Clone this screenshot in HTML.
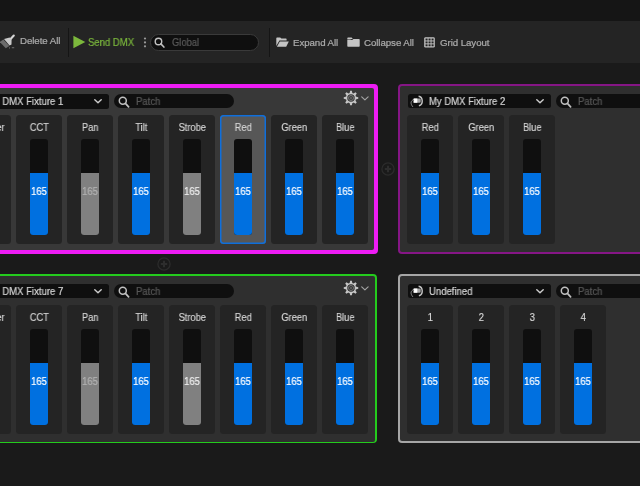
<!DOCTYPE html>
<html><head><meta charset="utf-8"><title>DMX Control Console</title><style>
html,body{margin:0;padding:0;}
body{-webkit-text-stroke:0.22px;width:640px;height:486px;overflow:hidden;background:#1a1a1a;position:relative;font-family:"Liberation Sans",sans-serif;font-size:9.6px;color:#c0c0c0;}
.top{position:absolute;left:0;top:0;width:640px;height:21px;background:#151515;}
.tb{position:absolute;left:0;top:21px;width:640px;height:42.4px;background:#242424;}
.t,.ddt,.ph,.lbl,.fill span,.gst{will-change:transform;}
.t{position:absolute;white-space:nowrap;line-height:12px;height:12px;color:#ababab;font-size:9.7px;letter-spacing:-0.06px;}
.sep{position:absolute;width:1.2px;background:#151515;top:27.5px;height:29.5px;}
.gs{position:absolute;left:150px;top:34.4px;width:106.5px;height:14.3px;border:1px solid #3a3a3a;border-radius:9px;background:#0f0f0f;}
.panel{position:absolute;border-radius:4px;}
.pin{position:absolute;border-radius:2px;}
.dd{position:absolute;width:143.3px;height:14.4px;background:#0f0f0f;border-radius:2.5px;}
.dd .fx{position:absolute;left:0;top:0;}
.dd .ddt{position:absolute;left:21.3px;top:1.7px;line-height:12px;color:#d4d4d4;white-space:nowrap;font-size:10.3px;transform:scaleX(0.925);transform-origin:0 50%;}
.dd .chev{position:absolute;left:128.2px;top:5.1px;}
.srch{position:absolute;width:120.5px;height:14px;background:#0f0f0f;border-radius:8px;}
.srch .mag{position:absolute;left:4px;top:1.6px;}
.ph{position:absolute;left:22.3px;top:1.8px;line-height:12px;color:#575757;font-size:10.3px;transform:scaleX(0.93);transform-origin:0 50%;}
.gear{position:absolute;}
.card{position:absolute;width:46.5px;height:129px;background:#242424;border-radius:3.5px;}
.card.sel{background:#575757;box-shadow:inset 0 0 0 1.5px #0f6fdc;}
.lbl{position:absolute;left:0;width:46.5px;top:6.9px;text-align:center;line-height:12px;color:#d8d8d8;font-size:10.1px;transform:scaleX(0.92);-webkit-text-stroke:0.15px;}
.trk{position:absolute;left:14.4px;top:23.8px;width:17.9px;height:96.3px;background:#0f0f0f;border-radius:3px;overflow:hidden;}
.fill{position:absolute;left:0;right:0;bottom:0;height:62.5px;}
.fill span{position:absolute;left:-10px;right:-10px;top:12.1px;text-align:center;line-height:12px;font-size:10.7px;transform:scaleX(0.87);-webkit-text-stroke:0.2px;}
.plus{position:absolute;}
</style></head><body>
<div class="top"></div><div class="tb"></div>
<svg style="position:absolute;left:0;top:33px;" width="16" height="17" viewBox="0 0 16 17"><path d="M13.8 2.5 L10.6 6.0" stroke="#d4d4d4" stroke-width="2.1" stroke-linecap="round"/><path d="M4.0 5.9 L9.6 4.6 L11.6 6.4 L11.5 11.4 L9.5 12.4 Z" fill="#cacaca"/><path d="M3.4 6.4 L9.3 12.9 L5.8 15.2 L-0.2 9.0 Z" fill="#6c6c6c"/><rect x="9.1" y="14.5" width="0.9" height="0.9" fill="#8a8a8a"/><rect x="11.8" y="14.3" width="2.4" height="0.9" fill="#7a7a7a"/></svg>
<div class="t" style="left:20.3px;top:34.6px;">Delete All</div>
<div class="sep" style="left:67.6px;"></div>
<svg style="position:absolute;left:73px;top:35px;" width="13" height="14" viewBox="0 0 13 14"><path d="M0.4 0.7 L12.3 7 L0.4 13.3 Z" fill="#7cb83c"/></svg>
<div class="t" style="left:88.2px;top:36.8px;color:#7ab63c;font-size:10.4px;transform:scaleX(0.925);transform-origin:0 50%;">Send DMX</div>
<svg style="position:absolute;left:142.8px;top:37px;" width="4" height="11" viewBox="0 0 4 11"><circle cx="2" cy="1.5" r="1.1" fill="#9a9a9a"/><circle cx="2" cy="5.4" r="1.1" fill="#9a9a9a"/><circle cx="2" cy="9.3" r="1.1" fill="#9a9a9a"/></svg>
<div class="gs"><svg style="position:absolute;left:3.2px;top:1.4px;" viewBox="0 0 12 12" width="11.2" height="11.2"><circle cx="4.8" cy="4.8" r="3.5" fill="none" stroke="#c0c0c0" stroke-width="1.5"/><path d="M7.4 7.4 L10.6 10.8" stroke="#c0c0c0" stroke-width="1.7" stroke-linecap="round"/></svg><span class="gst" style="position:absolute;left:21px;top:1.9px;line-height:12px;color:#5a5a5a;font-size:10.4px;transform:scaleX(0.9);transform-origin:0 50%;">Global</span></div>
<div class="sep" style="left:269px;"></div>
<svg style="position:absolute;left:276px;top:37px;" width="13" height="10" viewBox="0 0 13 10"><path d="M0.3 1.2 Q0.3 0.4 1.1 0.4 L4.2 0.4 L5.4 1.6 L10 1.6 Q10.6 1.6 10.6 2.3 L10.6 3.4 L3.4 3.4 L0.3 9 Z" fill="#c4c4c4"/><path d="M3.8 4.4 L12.8 4.4 L10.2 9.7 L0.9 9.7 Z" fill="#c4c4c4"/></svg>
<div class="t" style="left:293.3px;top:36.8px;">Expand All</div>
<svg style="position:absolute;left:347px;top:37px;" width="13" height="10" viewBox="0 0 13 10"><path d="M0.3 1.2 Q0.3 0.4 1.1 0.4 L4.6 0.4 L5.8 1.7 L3 2.4 L0.3 2.4 Z" fill="#c4c4c4"/><path d="M0.3 3 L5.2 3 L6.4 2 L12 2 Q12.7 2 12.7 2.7 L12.7 9 Q12.7 9.7 12 9.7 L1 9.7 Q0.3 9.7 0.3 9 Z" fill="#c4c4c4"/></svg>
<div class="t" style="left:364.3px;top:36.8px;">Collapse All</div>
<svg style="position:absolute;left:424px;top:37.4px;" width="11" height="11" viewBox="0 0 11 11"><rect x="0.2" y="0.2" width="10.6" height="10.4" rx="1.4" fill="#c4c4c4"/><g fill="#242424"><rect x="1.5" y="1.5" width="2.1" height="2"/><rect x="4.5" y="1.5" width="2.1" height="2"/><rect x="7.5" y="1.5" width="2.1" height="2"/><rect x="1.5" y="4.4" width="2.1" height="2"/><rect x="4.5" y="4.4" width="2.1" height="2"/><rect x="7.5" y="4.4" width="2.1" height="2"/><rect x="1.5" y="7.3" width="2.1" height="2"/><rect x="4.5" y="7.3" width="2.1" height="2"/><rect x="7.5" y="7.3" width="2.1" height="2"/></g></svg>
<div class="t" style="left:440.4px;top:36.8px;">Grid Layout</div>
<div class="panel" style="left:-44px;top:84.2px;width:421.5px;height:169.6px;background:#ee1cf5;">
<div class="pin" style="left:3.7px;top:3.7px;right:3.7px;bottom:4.1px;background:#383838;"></div>
<div class="dd" style="left:10px;top:10px;"><svg class="fx" viewBox="0 0 17 14.4" width="17" height="14.4"><path d="M5.4 5.8 C3.0 6.6 1.9 9.4 4.9 12.9" fill="none" stroke="#8c8c8c" stroke-width="1"/><path d="M10.6 2.2 C15.2 2.8 15.6 10.8 10.9 11.8" fill="none" stroke="#c4c4c4" stroke-width="1.4"/><rect x="5.4" y="4.5" width="7.3" height="4.3" rx="1" fill="#a4a4a4"/><path d="M6.2 4.5 H9.3 V8.8 H6.2 Q5.4 8.8 5.4 8 L6.3 6.65 L5.4 5.3 Q5.4 4.5 6.2 4.5 Z" fill="#ffffff"/></svg><span class="ddt">My DMX Fixture 1</span><svg class="chev" viewBox="0 0 10 6" width="8" height="4.8"><path d="M1 1 L5 4.8 L9 1" fill="none" stroke="#cccccc" stroke-width="1.8" stroke-linecap="round" stroke-linejoin="round"/></svg></div>
<div class="srch" style="left:157.5px;top:10.3px;"><svg class="mag" viewBox="0 0 12 12" width="12" height="12"><circle cx="4.8" cy="4.8" r="3.5" fill="none" stroke="#c0c0c0" stroke-width="1.5"/><path d="M7.4 7.4 L10.6 10.8" stroke="#c0c0c0" stroke-width="1.7" stroke-linecap="round"/></svg><span class="ph">Patch</span></div>
<svg class="gear" style="left:387.1px;top:6.2px;" viewBox="-8 -8 16 16" width="16" height="16"><path d="M-1.45 -4.6 L-0.85 -7.25 L0.85 -7.25 L1.45 -4.6 Z" fill="#c6c6c6" transform="rotate(0)"/><path d="M-1.45 -4.6 L-0.85 -7.25 L0.85 -7.25 L1.45 -4.6 Z" fill="#c6c6c6" transform="rotate(45)"/><path d="M-1.45 -4.6 L-0.85 -7.25 L0.85 -7.25 L1.45 -4.6 Z" fill="#c6c6c6" transform="rotate(90)"/><path d="M-1.45 -4.6 L-0.85 -7.25 L0.85 -7.25 L1.45 -4.6 Z" fill="#c6c6c6" transform="rotate(135)"/><path d="M-1.45 -4.6 L-0.85 -7.25 L0.85 -7.25 L1.45 -4.6 Z" fill="#c6c6c6" transform="rotate(180)"/><path d="M-1.45 -4.6 L-0.85 -7.25 L0.85 -7.25 L1.45 -4.6 Z" fill="#c6c6c6" transform="rotate(225)"/><path d="M-1.45 -4.6 L-0.85 -7.25 L0.85 -7.25 L1.45 -4.6 Z" fill="#c6c6c6" transform="rotate(270)"/><path d="M-1.45 -4.6 L-0.85 -7.25 L0.85 -7.25 L1.45 -4.6 Z" fill="#c6c6c6" transform="rotate(315)"/><circle r="4.45" fill="none" stroke="#c6c6c6" stroke-width="1.4"/><circle r="2.5" fill="none" stroke="#858585" stroke-width="0.8"/><circle r="1.2" fill="#5c5c5c"/></svg>
<svg style="position:absolute;left:404.6px;top:12.3px;" viewBox="0 0 9 6" width="8" height="5.33"><path d="M0.8 0.9 L4.4 4.4 L8 0.9" fill="none" stroke="#a4a4a4" stroke-width="1.3" stroke-linecap="round" stroke-linejoin="round"/></svg>
<div class="card" style="left:8.8px;top:31px;"><div class="lbl">Dimmer</div><div class="trk"><div class="fill" style="background:#0070e0;color:#ffffff;"><span>165</span></div></div></div>
<div class="card" style="left:59.8px;top:31px;"><div class="lbl">CCT</div><div class="trk"><div class="fill" style="background:#0070e0;color:#ffffff;"><span>165</span></div></div></div>
<div class="card" style="left:110.8px;top:31px;"><div class="lbl">Pan</div><div class="trk"><div class="fill" style="background:#808080;color:#b2b2b2;"><span>165</span></div></div></div>
<div class="card" style="left:161.8px;top:31px;"><div class="lbl">Tilt</div><div class="trk"><div class="fill" style="background:#0070e0;color:#ffffff;"><span>165</span></div></div></div>
<div class="card" style="left:212.8px;top:31px;"><div class="lbl">Strobe</div><div class="trk"><div class="fill" style="background:#808080;color:#f0f0f0;"><span>165</span></div></div></div>
<div class="card sel" style="left:263.8px;top:31px;"><div class="lbl">Red</div><div class="trk"><div class="fill" style="background:#0070e0;color:#ffffff;"><span>165</span></div></div></div>
<div class="card" style="left:314.8px;top:31px;"><div class="lbl">Green</div><div class="trk"><div class="fill" style="background:#0070e0;color:#ffffff;"><span>165</span></div></div></div>
<div class="card" style="left:365.8px;top:31px;"><div class="lbl">Blue</div><div class="trk"><div class="fill" style="background:#0070e0;color:#ffffff;"><span>165</span></div></div></div>
</div>
<div class="panel" style="left:398px;top:84px;width:421.5px;height:169.7px;background:#861686;">
<div class="pin" style="left:2px;top:2px;right:2px;bottom:2px;background:#2f2f2f;"></div>
<div class="dd" style="left:10px;top:10px;"><svg class="fx" viewBox="0 0 17 14.4" width="17" height="14.4"><path d="M5.4 5.8 C3.0 6.6 1.9 9.4 4.9 12.9" fill="none" stroke="#8c8c8c" stroke-width="1"/><path d="M10.6 2.2 C15.2 2.8 15.6 10.8 10.9 11.8" fill="none" stroke="#c4c4c4" stroke-width="1.4"/><rect x="5.4" y="4.5" width="7.3" height="4.3" rx="1" fill="#a4a4a4"/><path d="M6.2 4.5 H9.3 V8.8 H6.2 Q5.4 8.8 5.4 8 L6.3 6.65 L5.4 5.3 Q5.4 4.5 6.2 4.5 Z" fill="#ffffff"/></svg><span class="ddt">My DMX Fixture 2</span><svg class="chev" viewBox="0 0 10 6" width="8" height="4.8"><path d="M1 1 L5 4.8 L9 1" fill="none" stroke="#cccccc" stroke-width="1.8" stroke-linecap="round" stroke-linejoin="round"/></svg></div>
<div class="srch" style="left:157.5px;top:10.3px;"><svg class="mag" viewBox="0 0 12 12" width="12" height="12"><circle cx="4.8" cy="4.8" r="3.5" fill="none" stroke="#c0c0c0" stroke-width="1.5"/><path d="M7.4 7.4 L10.6 10.8" stroke="#c0c0c0" stroke-width="1.7" stroke-linecap="round"/></svg><span class="ph">Patch</span></div>
<div class="card" style="left:8.8px;top:31px;"><div class="lbl">Red</div><div class="trk"><div class="fill" style="background:#0070e0;color:#ffffff;"><span>165</span></div></div></div>
<div class="card" style="left:59.8px;top:31px;"><div class="lbl">Green</div><div class="trk"><div class="fill" style="background:#0070e0;color:#ffffff;"><span>165</span></div></div></div>
<div class="card" style="left:110.8px;top:31px;"><div class="lbl">Blue</div><div class="trk"><div class="fill" style="background:#0070e0;color:#ffffff;"><span>165</span></div></div></div>
</div>
<div class="panel" style="left:-44px;top:274px;width:420.8px;height:169.0px;background:#24cb1d;">
<div class="pin" style="left:1.5px;top:1.5px;right:1.5px;bottom:1.5px;background:#2f2f2f;"></div>
<div class="dd" style="left:10px;top:10px;"><svg class="fx" viewBox="0 0 17 14.4" width="17" height="14.4"><path d="M5.4 5.8 C3.0 6.6 1.9 9.4 4.9 12.9" fill="none" stroke="#8c8c8c" stroke-width="1"/><path d="M10.6 2.2 C15.2 2.8 15.6 10.8 10.9 11.8" fill="none" stroke="#c4c4c4" stroke-width="1.4"/><rect x="5.4" y="4.5" width="7.3" height="4.3" rx="1" fill="#a4a4a4"/><path d="M6.2 4.5 H9.3 V8.8 H6.2 Q5.4 8.8 5.4 8 L6.3 6.65 L5.4 5.3 Q5.4 4.5 6.2 4.5 Z" fill="#ffffff"/></svg><span class="ddt">My DMX Fixture 7</span><svg class="chev" viewBox="0 0 10 6" width="8" height="4.8"><path d="M1 1 L5 4.8 L9 1" fill="none" stroke="#cccccc" stroke-width="1.8" stroke-linecap="round" stroke-linejoin="round"/></svg></div>
<div class="srch" style="left:157.5px;top:10.3px;"><svg class="mag" viewBox="0 0 12 12" width="12" height="12"><circle cx="4.8" cy="4.8" r="3.5" fill="none" stroke="#c0c0c0" stroke-width="1.5"/><path d="M7.4 7.4 L10.6 10.8" stroke="#c0c0c0" stroke-width="1.7" stroke-linecap="round"/></svg><span class="ph">Patch</span></div>
<svg class="gear" style="left:387.1px;top:6.2px;" viewBox="-8 -8 16 16" width="16" height="16"><path d="M-1.45 -4.6 L-0.85 -7.25 L0.85 -7.25 L1.45 -4.6 Z" fill="#c6c6c6" transform="rotate(0)"/><path d="M-1.45 -4.6 L-0.85 -7.25 L0.85 -7.25 L1.45 -4.6 Z" fill="#c6c6c6" transform="rotate(45)"/><path d="M-1.45 -4.6 L-0.85 -7.25 L0.85 -7.25 L1.45 -4.6 Z" fill="#c6c6c6" transform="rotate(90)"/><path d="M-1.45 -4.6 L-0.85 -7.25 L0.85 -7.25 L1.45 -4.6 Z" fill="#c6c6c6" transform="rotate(135)"/><path d="M-1.45 -4.6 L-0.85 -7.25 L0.85 -7.25 L1.45 -4.6 Z" fill="#c6c6c6" transform="rotate(180)"/><path d="M-1.45 -4.6 L-0.85 -7.25 L0.85 -7.25 L1.45 -4.6 Z" fill="#c6c6c6" transform="rotate(225)"/><path d="M-1.45 -4.6 L-0.85 -7.25 L0.85 -7.25 L1.45 -4.6 Z" fill="#c6c6c6" transform="rotate(270)"/><path d="M-1.45 -4.6 L-0.85 -7.25 L0.85 -7.25 L1.45 -4.6 Z" fill="#c6c6c6" transform="rotate(315)"/><circle r="4.45" fill="none" stroke="#c6c6c6" stroke-width="1.4"/><circle r="2.5" fill="none" stroke="#858585" stroke-width="0.8"/><circle r="1.2" fill="#5c5c5c"/></svg>
<svg style="position:absolute;left:404.6px;top:12.3px;" viewBox="0 0 9 6" width="8" height="5.33"><path d="M0.8 0.9 L4.4 4.4 L8 0.9" fill="none" stroke="#a4a4a4" stroke-width="1.3" stroke-linecap="round" stroke-linejoin="round"/></svg>
<div class="card" style="left:8.8px;top:31px;"><div class="lbl">Dimmer</div><div class="trk"><div class="fill" style="background:#0070e0;color:#ffffff;"><span>165</span></div></div></div>
<div class="card" style="left:59.8px;top:31px;"><div class="lbl">CCT</div><div class="trk"><div class="fill" style="background:#0070e0;color:#ffffff;"><span>165</span></div></div></div>
<div class="card" style="left:110.8px;top:31px;"><div class="lbl">Pan</div><div class="trk"><div class="fill" style="background:#808080;color:#b2b2b2;"><span>165</span></div></div></div>
<div class="card" style="left:161.8px;top:31px;"><div class="lbl">Tilt</div><div class="trk"><div class="fill" style="background:#0070e0;color:#ffffff;"><span>165</span></div></div></div>
<div class="card" style="left:212.8px;top:31px;"><div class="lbl">Strobe</div><div class="trk"><div class="fill" style="background:#808080;color:#f0f0f0;"><span>165</span></div></div></div>
<div class="card" style="left:263.8px;top:31px;"><div class="lbl">Red</div><div class="trk"><div class="fill" style="background:#0070e0;color:#ffffff;"><span>165</span></div></div></div>
<div class="card" style="left:314.8px;top:31px;"><div class="lbl">Green</div><div class="trk"><div class="fill" style="background:#0070e0;color:#ffffff;"><span>165</span></div></div></div>
<div class="card" style="left:365.8px;top:31px;"><div class="lbl">Blue</div><div class="trk"><div class="fill" style="background:#0070e0;color:#ffffff;"><span>165</span></div></div></div>
</div>
<div class="panel" style="left:398px;top:274px;width:421.5px;height:169.2px;background:#a6a6a6;">
<div class="pin" style="left:1.9px;top:1.9px;right:1.9px;bottom:1.9px;background:#2f2f2f;"></div>
<div class="dd" style="left:10px;top:10px;"><svg class="fx" viewBox="0 0 17 14.4" width="17" height="14.4"><path d="M5.4 5.8 C3.0 6.6 1.9 9.4 4.9 12.9" fill="none" stroke="#8c8c8c" stroke-width="1"/><path d="M10.6 2.2 C15.2 2.8 15.6 10.8 10.9 11.8" fill="none" stroke="#c4c4c4" stroke-width="1.4"/><rect x="5.4" y="4.5" width="7.3" height="4.3" rx="1" fill="#a4a4a4"/><path d="M6.2 4.5 H9.3 V8.8 H6.2 Q5.4 8.8 5.4 8 L6.3 6.65 L5.4 5.3 Q5.4 4.5 6.2 4.5 Z" fill="#ffffff"/></svg><span class="ddt">Undefined</span><svg class="chev" viewBox="0 0 10 6" width="8" height="4.8"><path d="M1 1 L5 4.8 L9 1" fill="none" stroke="#cccccc" stroke-width="1.8" stroke-linecap="round" stroke-linejoin="round"/></svg></div>
<div class="srch" style="left:157.5px;top:10.3px;"><svg class="mag" viewBox="0 0 12 12" width="12" height="12"><circle cx="4.8" cy="4.8" r="3.5" fill="none" stroke="#c0c0c0" stroke-width="1.5"/><path d="M7.4 7.4 L10.6 10.8" stroke="#c0c0c0" stroke-width="1.7" stroke-linecap="round"/></svg><span class="ph">Patch</span></div>
<div class="card" style="left:8.8px;top:31px;"><div class="lbl">1</div><div class="trk"><div class="fill" style="background:#0070e0;color:#ffffff;"><span>165</span></div></div></div>
<div class="card" style="left:59.8px;top:31px;"><div class="lbl">2</div><div class="trk"><div class="fill" style="background:#0070e0;color:#ffffff;"><span>165</span></div></div></div>
<div class="card" style="left:110.8px;top:31px;"><div class="lbl">3</div><div class="trk"><div class="fill" style="background:#0070e0;color:#ffffff;"><span>165</span></div></div></div>
<div class="card" style="left:161.8px;top:31px;"><div class="lbl">4</div><div class="trk"><div class="fill" style="background:#0070e0;color:#ffffff;"><span>165</span></div></div></div>
</div>
<svg class="plus" style="left:379.8px;top:161px;" width="16" height="16" viewBox="-8 -8 16 16"><circle r="6.1" fill="none" stroke="#2b2b2b" stroke-width="1.3"/><path d="M-3.2 0 H3.2 M0 -3.2 V3.2" stroke="#2d2d2d" stroke-width="2"/></svg>
<svg class="plus" style="left:156.4px;top:255.6px;" width="16" height="16" viewBox="-8 -8 16 16"><circle r="6.1" fill="none" stroke="#2b2b2b" stroke-width="1.3"/><path d="M-3.2 0 H3.2 M0 -3.2 V3.2" stroke="#2d2d2d" stroke-width="2"/></svg>
</body></html>
